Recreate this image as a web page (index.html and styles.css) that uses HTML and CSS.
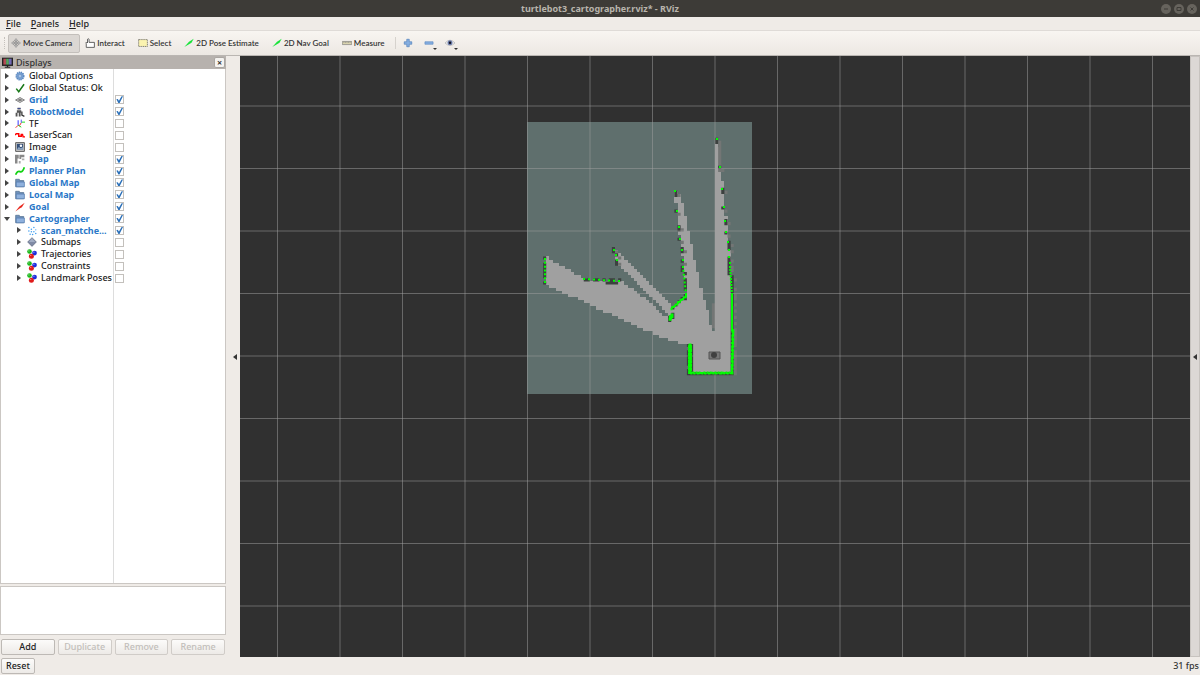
FILE: index.html
```
<!DOCTYPE html>
<html lang="en">
<head>
    <meta charset="UTF-8">
    <meta name="viewport" content="width=device-width, initial-scale=1.0">
    <title>turtlebot3_cartographer.rviz* - RViz</title>
    <link rel="stylesheet" href="styles.css">
</head>
<body>
    <!-- shared icons -->
    <svg class="sprite" aria-hidden="true">
        <symbol id="i-move" viewBox="0 0 16 16"><g fill="#ddd" stroke="#777" stroke-width="1"><path d="M8 1l2.500 3h-1.500v2h-2V4H5.500zM8 15l2.500-3H9v-2H7v2H5.500zM1 8l3-2.500V7h2v2H4v1.500zM15 8l-3-2.500V7h-2v2h2v1.500z"/><circle cx="8" cy="8" r="1.500"/></g></symbol>
        <symbol id="i-hand" viewBox="0 0 16 16"><path d="M2 15V9L1 8l1.500-1.500L4 8V2q1.500-1.500 2.500 0v5H15v8z" fill="#fff" stroke="#444" stroke-width="1.300"/></symbol>
        <symbol id="i-select" viewBox="0 0 16 16"><path d="M1 2.500h14v11H1z" fill="#fbf3b0" stroke="#444" stroke-dasharray="2 1"/></symbol>
        <symbol id="i-arrow" viewBox="0 0 16 16"><path d="M.5 14.500L8 6l7.500-5L12 7.500 8 10z" fill="#1be33b"/></symbol>
        <symbol id="i-ruler" viewBox="0 0 16 16"><path d="M.5 5.500h15v5H.5z" fill="#d9d3ae" stroke="#777"/><path d="M3 6v2M5.500 6v2M8 6v2M10.500 6v2M13 6v2" stroke="#888"/></symbol>
        <symbol id="i-plus" viewBox="0 0 16 16"><path d="M6 2h4v4h4v4h-4v4H6v-4H2V6h4z" fill="#85aee0" stroke="#4a7ab8"/></symbol>
        <symbol id="i-minus" viewBox="0 0 16 16"><path d="M1.500 6h13v4h-13z" fill="#85aee0" stroke="#5c8ac4"/></symbol>
        <symbol id="i-eye" viewBox="0 0 16 16"><path d="M0 8q8-9 16 0-8 8-16 0z" fill="#eee" stroke="#aaa"/><circle cx="8" cy="7.500" r="4" fill="#7080ae"/><circle cx="8" cy="7.500" r="2" fill="#112"/></symbol>
        <symbol id="i-monitor" viewBox="0 0 16 16"><path d="M0 1h16v12H0z" fill="#222"/><path d="M2 2.500h4v8.500H2z" fill="#b44b55"/><path d="M6 2.500h4v8.500H6z" fill="#55a561"/><path d="M10 2.500h4v8.500h-4z" fill="#7269b5"/><path d="M7 12h2v2h3v1.500H4V14h3z" fill="#222"/></symbol>
        <symbol id="i-gear" viewBox="0 0 16 16"><circle cx="8" cy="8" r="6" fill="#7ba3d4" stroke="#5b88bf" stroke-width="2.500" stroke-dasharray="2 1.200"/><circle cx="8" cy="8" r="3" fill="#a9c4e6" stroke="#5b88bf"/></symbol>
        <symbol id="i-check" viewBox="0 0 16 16"><path d="M2 9l4 5L14.500 2" fill="none" stroke="#187818" stroke-width="2.400"/></symbol>
        <symbol id="i-grid" viewBox="0 0 16 16"><path d="M1 8l7-4 7 4-7 4zM4.500 6l7 4M11.500 6l-7 4M8 4v8M1 8h14" fill="none" stroke="#666" stroke-width="1.100"/></symbol>
        <symbol id="i-robot" viewBox="0 0 16 16"><path d="M4 1h5v3H4zM3 5h7v4H3zM1 9h3v6H1zM6 9h3v6H6z" fill="#555"/><path d="M4 2h5v1H4z" fill="#3545ac"/><path d="M11 7v6l4 2" fill="none" stroke="#333" stroke-width="2"/></symbol>
        <symbol id="i-tf" viewBox="0 0 16 16"><g fill="none" stroke-width="1.600"><path d="M5 2v8" stroke="#33f"/><path d="M5 10l-4 4" stroke="#e33"/><path d="M5 10l5 3" stroke="#2c2"/><path d="M10 6l-3 5" stroke="#e33"/><path d="M10 5h6" stroke="#2d2"/><path d="M10 6V1" stroke="#55f"/></g></symbol>
        <symbol id="i-laser" viewBox="0 0 16 16"><path d="M0 8l2-2h4v4h4V7h2l1 4h3" fill="none" stroke="#f00" stroke-width="2.300"/></symbol>
        <symbol id="i-image" viewBox="0 0 16 16"><path d="M1 1h14v14H1z" fill="#ccc" stroke="#555" stroke-width="1.500"/><path d="M3 3h10v9H3z" fill="#365078"/><path d="M3 12l3-4 3 2 4-2v4z" fill="#8fa7c4"/><circle cx="9.500" cy="6" r="2" fill="#fff"/></symbol>
        <symbol id="i-map" viewBox="0 0 16 16"><path d="M0 1h6v6H4v8H0zM7 1h8v4h-5v3H7z" fill="#888"/><path d="M11 7h4v3h-4zM6 11h3v4H6z" fill="#aaa"/></symbol>
        <symbol id="i-path" viewBox="0 0 16 16"><path d="M1 14q3-7 7-5t7-7" fill="none" stroke="#12d312" stroke-width="2.800"/></symbol>
        <symbol id="i-folder" viewBox="0 0 16 16"><path d="M1 3V2h6v2h7v10H1z" fill="#6f91bb" stroke="#4a6689"/><path d="M2 6.500h13V14H2z" fill="#8fb1dd" stroke="#4d76aa"/></symbol>
        <symbol id="i-goal" viewBox="0 0 16 16"><path d="M.5 15L7 7l8.500-6L11 8.500 8 10z" fill="#e8281e"/></symbol>
        <symbol id="i-points" viewBox="0 0 16 16"><g fill="#3d9df0"><circle cx="3" cy="2.500" r="1.200"/><circle cx="7" cy="5" r="1.200"/><circle cx="11" cy="2.500" r="1.200"/><circle cx="14" cy="6" r="1"/><circle cx="3" cy="8" r="1.200"/><circle cx="7" cy="9" r="1.200"/><circle cx="11" cy="9" r="1.200"/><circle cx="5" cy="13" r="1.200"/><circle cx="9" cy="13.500" r="1.200"/><circle cx="14" cy="12" r="1.200"/></g></symbol>
        <symbol id="i-diamond" viewBox="0 0 16 16"><path d="M8 1l7 7-7 7-7-7z" fill="#7f8aa5" stroke="#596278"/><path d="M8 2l5 6H3z" fill="#a2adc4"/></symbol>
        <symbol id="i-balls" viewBox="0 0 16 16"><circle cx="4" cy="4" r="3.700" fill="#18b818"/><circle cx="12" cy="6.500" r="3.800" fill="#1c2dde"/><circle cx="7" cy="11.500" r="4" fill="#e01b1b"/><g fill="#fff" opacity=".6"><circle cx="3" cy="3" r="1"/><circle cx="11" cy="5" r="1"/><circle cx="6" cy="10" r="1"/></g></symbol>
    </svg>

    <div class="titlebar">
        <h1>turtlebot3_cartographer.rviz* - RViz</h1>
        <div class="window-buttons">
            <button aria-label="Minimize"><svg viewBox="0 0 10 10"><path d="M3 5h4"/></svg></button>
            <button aria-label="Maximize"><svg viewBox="0 0 10 10"><path d="M3 3.500h4v3H3z"/></svg></button>
            <button aria-label="Close"><svg viewBox="0 0 10 10"><path d="M3.500 3.500l3 3M6.500 3.500l-3 3"/></svg></button>
        </div>
    </div>
    <nav class="menubar">
        <button><u>F</u>ile</button>
        <button><u>P</u>anels</button>
        <button><u>H</u>elp</button>
    </nav>
    <div class="toolbar">
        <span class="handle"></span>
        <button class="tool active"><svg><use href="#i-move"/></svg>Move Camera</button>
        <button class="tool"><svg><use href="#i-hand"/></svg>Interact</button>
        <button class="tool"><svg><use href="#i-select"/></svg>Select</button>
        <button class="tool"><svg><use href="#i-arrow"/></svg>2D Pose Estimate</button>
        <button class="tool"><svg><use href="#i-arrow"/></svg>2D Nav Goal</button>
        <button class="tool"><svg><use href="#i-ruler"/></svg>Measure</button>
        <span class="separator"></span>
        <button class="small-tool" aria-label="Add tool"><svg><use href="#i-plus"/></svg></button>
        <button class="small-tool drop" aria-label="Remove tool"><svg><use href="#i-minus"/></svg></button>
        <button class="small-tool drop" aria-label="Tool visibility"><svg><use href="#i-eye"/></svg></button>
    </div>

    <main>
        <aside class="displays">
            <div class="panel-title">
                <svg><use href="#i-monitor"/></svg>
                <h2>Displays</h2>
                <button aria-label="Close panel">×</button>
            </div>
            <div class="tree-box">
                <ul class="tree" id="tree"></ul>
            </div>
            <div class="description"></div>
            <div class="actions">
                <button>Add</button>
                <button disabled>Duplicate</button>
                <button disabled>Remove</button>
                <button disabled>Rename</button>
            </div>
        </aside>
        <button class="collapse left" aria-label="Hide left panels"></button>
        <svg class="view" viewBox="240 56 950 601" preserveAspectRatio="xMidYMid slice">
            <rect class="map" x="527" y="122" width="225" height="272"/>
            <g id="cells"></g>
            <g id="grid"></g>
            <g id="scan"></g>
            <g class="robot">
                <path d="M709 352h11v7h-11z"/>
                <circle cx="714" cy="355" r="3"/>
            </g>
        </svg>
        <button class="collapse right" aria-label="Hide right panels"></button>
    </main>
    <footer>
        <button>Reset</button>
        <span>31 fps</span>
    </footer>
    <script src="script.js"></script>
</body>
</html>
```
FILE: styles.css
```
* {
    box-sizing: border-box;
}
body {
    margin: 0;
    height: 100vh;
    display: flex;
    flex-direction: column;
    overflow: hidden;
    background: #efebe7;
    color: #333;
    font-family: "Noto Sans", "Open Sans", sans-serif;
    font-size: 9px;
    line-height: 12px;
}
button {
    font: inherit;
    color: inherit;
    padding: 0;
    border: none;
    background: none;
}
h1, h2 {
    margin: 0;
    font-size: inherit;
}
.sprite {
    display: none;
}
.titlebar {
    display: grid;
    grid-template-columns: 1fr auto 1fr;
    align-items: center;
    height: 17px;
    background: #3d3b37;
    color: #b8b4ac;
}
.titlebar h1 {
    grid-column: 2;
    font-weight: 700;
}
.window-buttons {
    display: flex;
    justify-content: flex-end;
    gap: 3px;
    padding-right: 3px;
}
.window-buttons button {
    width: 10px;
    height: 10px;
    border-radius: 50%;
    background: #66635d;
}
.window-buttons svg {
    display: block;
    fill: none;
    stroke: #3d3b37;
}
.menubar {
    display: flex;
    gap: 10px;
    height: 14px;
    padding: 1px 6px;
    border-bottom: 1px solid #dfdbd7;
    color: #222;
    font-weight: 500;
}
.menubar u {
    text-underline-offset: 1px;
}
.toolbar {
    display: flex;
    align-items: center;
    height: 25px;
    padding: 0 4px;
    border-bottom: 1px solid #bab6b2;
    background: linear-gradient(#f8f5f1, #ece8e3);
    font-family: Lato, "Noto Sans", sans-serif;
    font-size: 8px;
    font-weight: 600;
}
.handle {
    width: 2px;
    height: 12px;
    margin-right: 2px;
    border-left: 1px dotted #c5c1bc;
}
.tool {
    display: flex;
    align-items: center;
    gap: 2px;
    height: 19px;
    padding: 0 3px 0 2px;
    margin-right: 6px;
    border: 1px solid transparent;
    border-radius: 2px;
}
.tool.active {
    background: #dbd7d3;
    border-color: #c3bfbb;
    padding-right: 7px;
    margin-right: 2px;
}
.tool svg, .small-tool svg {
    width: 10px;
    height: 10px;
}
.separator {
    height: 12px;
    margin-right: 7px;
    border-left: 1px solid #d6d2cd;
}
.small-tool {
    display: flex;
    position: relative;
    margin-right: 11px;
}
.drop::after {
    content: "";
    position: absolute;
    right: -3px;
    bottom: -2px;
    border: 2px solid transparent;
    border-top-color: #333;
    border-bottom: none;
}
main {
    flex: 1;
    display: flex;
    min-height: 0;
}
.displays {
    width: 226px;
    display: flex;
    flex-direction: column;
}
.panel-title {
    display: flex;
    align-items: center;
    gap: 3px;
    height: 13px;
    padding: 0 1px 0 2px;
    background: #b7b2ae;
}
.panel-title svg {
    width: 11px;
    height: 11px;
}
.panel-title h2 {
    flex: 1;
    font-weight: 500;
}
.panel-title button {
    width: 11px;
    height: 11px;
    border: 1px solid #aaa6a2;
    border-radius: 2px;
    background: #f5f3f0;
    font-weight: 700;
    line-height: 8px;
}
.tree-box {
    flex: 1;
    border: 1px solid #cbc7c3;
    border-top: none;
    /* value column divider */
    background: linear-gradient(#ddd, #ddd) 112px 0 / 1px 100% no-repeat #fff;
}
.tree {
    display: grid;
    grid-auto-rows: 1fr;
    height: 215px;
    margin: 0;
    padding: 1px 0 0;
    list-style: none;
    font-weight: 500;
}
.tree li {
    display: flex;
    align-items: center;
    min-height: 0;
    padding-left: 2px;
    color: #222;
}
.tree .child {
    padding-left: 14px;
}
.tree label {
    display: flex;
    flex: 1;
    align-items: center;
}
.tree .name {
    display: flex;
    align-items: center;
    gap: 4px;
    width: 99px;
    white-space: nowrap;
}
.tree .child .name {
    width: 87px;
}
.tree svg {
    flex: none;
    width: 10px;
    height: 10px;
}
.tree .on {
    color: #2a78c8;
    font-weight: 700;
}
.expander {
    width: 12px;
    height: 10px;
    display: flex;
    align-items: center;
}
.expander::before {
    content: "";
    margin-left: 2px;
    border: 3px solid transparent;
    border-left: 4px solid #444;
    border-right: none;
}
.expander.open::before {
    margin-left: 1px;
    border: 3px solid transparent;
    border-top: 4px solid #444;
    border-bottom: none;
}
input[type="checkbox"] {
    appearance: none;
    flex: none;
    width: 9px;
    height: 9px;
    margin: 0 0 0 1px;
    border: 1px solid #c3c0bc;
    background: #fff;
}
input[type="checkbox"]:checked::before {
    content: "";
    display: block;
    width: 7px;
    height: 7px;
    background: #2a6fb8;
    clip-path: polygon(5% 45%, 25% 40%, 42% 65%, 80% 0, 100% 0, 50% 100%, 35% 100%);
}
.description {
    height: 49px;
    margin-top: 2px;
    border: 1px solid #cbc7c3;
    background: #fff;
}
.actions {
    display: grid;
    grid-template-columns: repeat(4, 1fr);
    gap: 3px;
    padding: 4px 1px 2px;
}
.actions button, footer button {
    height: 16px;
    border: 1px solid #bdb9b5;
    border-radius: 2px;
    background: linear-gradient(#fcfbfa, #edeae7);
    color: #222;
    font-weight: 500;
}
.actions button:disabled {
    border-color: #d0ccc8;
    color: #c2beba;
}
.collapse {
    display: flex;
    align-items: center;
    justify-content: center;
    width: 14px;
}
.collapse::before {
    content: "";
    border: 3px solid transparent;
    border-right: 4px solid #333;
    border-left: none;
}
.collapse.left {
    padding-left: 4px;
}
.collapse.right {
    width: 10px;
    border: 1px solid #c7c3bf;
    background: #dcd8d5;
}
.view {
    flex: 1;
    min-width: 0;
    height: 100%;
    background: #303030;
}
.map {
    fill: #5f6f6d;
}
.free {
    fill: #a0a0a0;
}
.wall {
    fill: #3c413f;
}
.edge {
    fill: #737675;
}
.hit {
    fill: #0f0;
}
.line {
    stroke: #a0a0a0;
    stroke-opacity: 0.5;
}
.robot path {
    fill: #777;
    stroke: #555;
}
.robot circle {
    fill: #404040;
}
footer {
    display: flex;
    align-items: center;
    justify-content: space-between;
    height: 18px;
    padding: 0 1px;
    font-weight: 500;
}
footer button {
    padding: 0 4px;
}
```
FILE: script.js
```
const SVG = 'http://www.w3.org/2000/svg';

// name, icon, state (true / false / null = no checkbox), child
const displays = [
    ['Global Options', 'gear', null],
    ['Global Status: Ok', 'check', null],
    ['Grid', 'grid', true],
    ['RobotModel', 'robot', true],
    ['TF', 'tf', false],
    ['LaserScan', 'laser', false],
    ['Image', 'image', false],
    ['Map', 'map', true],
    ['Planner Plan', 'path', true],
    ['Global Map', 'folder', true],
    ['Local Map', 'folder', true],
    ['Goal', 'goal', true],
    ['Cartographer', 'folder', true],
    ['scan_matche...', 'points', true, true],
    ['Submaps', 'diamond', false, true],
    ['Trajectories', 'balls', false, true],
    ['Constraints', 'balls', false, true],
    ['Landmark Poses', 'balls', false, true]
];

document.getElementById('tree').innerHTML = displays.map(([name, icon, state, child]) => {
    const tag = state === null ? 'span' : 'label';
    const box = state === null ? '' : `<input type="checkbox" ${state ? 'checked' : ''}>`;
    return `<li class="${child ? 'child' : ''}">
        <button class="expander ${name === 'Cartographer' ? 'open' : ''}" aria-label="Expand ${name}"></button>
        <${tag}><span class="name ${state ? 'on' : ''}"><svg><use href="#i-${icon}"/></svg>${name}</span>${box}</${tag}>
    </li>`;
}).join('');

function add(parent, tag, attrs) {
    const el = document.createElementNS(SVG, tag);
    for (const key in attrs) {
        el.setAttribute(key, attrs[key]);
    }
    document.getElementById(parent).appendChild(el);
}

// 1 m grid
const METER = 62.5;
for (let x = 277.5 - METER * 10; x < 2400; x += METER) {
    add('grid', 'path', { class: 'line', d: `M${x} -600V1400` });
}
for (let y = 106 - METER * 10; y < 1400; y += METER) {
    add('grid', 'path', { class: 'line', d: `M-600 ${y}H2400` });
}

// occupancy map, 5 cm cells
const CELL = METER / 20;
const LEFT = 527.5;
const TOP = 122;

const free = [
    // long beam and the box around the robot
    [[715, 141], [719, 141], [722, 172], [724, 195], [727, 225], [730, 262], [732, 290], [733, 373],
     [692, 373], [692, 346], [711, 330], [713, 340], [715, 300]],
    // second beam
    [[675, 190], [678, 190], [681, 197], [684, 210], [687, 225], [690, 238], [696, 264], [702, 292],
     [706, 305], [709, 320], [711, 330], [714, 350], [690, 346], [671, 320], [671, 309], [686, 296],
     [685, 280], [682, 255], [678, 225], [676, 203]],
    // narrow beam
    [[613, 250], [616, 249], [624, 257], [668, 303], [674, 309], [671, 316], [618, 263]],
    // wide beam on the left
    [[546, 257], [552, 260], [581, 277], [586, 280], [622, 282], [634, 289], [669, 319], [692, 319],
     [692, 346], [672, 341], [647, 331], [586, 303], [546, 285]]
];

function inside(poly, x, y) {
    let hit = false;
    for (let i = 0, j = poly.length - 1; i < poly.length; j = i++) {
        const [xi, yi] = poly[i];
        const [xj, yj] = poly[j];
        if ((yi > y) !== (yj > y) && x < (xj - xi) * (y - yi) / (yj - yi) + xi) {
            hit = !hit;
        }
    }
    return hit;
}

function cellPath(col, row) {
    return `M${LEFT + col * CELL} ${TOP + row * CELL}h${CELL}v${CELL}h-${CELL}z`;
}

let freePath = '';
for (let row = 0; row < 87; row++) {
    for (let col = 0; col < 72; col++) {
        const x = LEFT + (col + 0.5) * CELL;
        const y = TOP + (row + 0.5) * CELL;
        if (free.some(poly => inside(poly, x, y))) {
            freePath += cellPath(col, row);
        }
    }
}
add('cells', 'path', { class: 'free', d: freePath, 'shape-rendering': 'crispEdges' });

// laser returns: single points and [x1, y1, x2, y2, spacing, size] runs
const points = [
    [717, 139], [720, 167], [722, 189], [724, 207], [725, 221], [726, 232], [728, 242],
    [729, 250], [729, 257], [730, 263], [675, 191], [677, 211], [679, 227], [680, 239],
    [682, 250], [683, 260], [614, 250], [616, 255], [617, 260]
];
const runs = [
    [545, 259, 545, 282, 4, 2],
    [584, 279, 619, 281, 5, 2],
    [683, 267, 686, 294, 4, 2],
    [686, 296, 671, 309, 1, 2],
    [672, 315, 670, 319, 1, 3],
    [730, 267, 732, 294, 3, 2],
    [732, 294, 732, 330, 2, 2],
    [733, 330, 732, 372, 1, 2],
    [690, 345, 690, 372, 1, 3],
    [690, 373, 732, 373, 1, 2]
];
const hits = points.map(([x, y]) => [x, y, 2, true]);
runs.forEach(([x1, y1, x2, y2, spacing, size]) => {
    const count = Math.round(Math.hypot(x2 - x1, y2 - y1) / spacing);
    // sensor noise on the dense runs
    const noise = spacing === 1 ? 0.6 : 0;
    for (let i = 0; i <= count; i++) {
        hits.push([
            x1 + (x2 - x1) * i / count + noise * Math.sin(i * 2.3),
            y1 + (y2 - y1) * i / count + noise * Math.sin(i * 1.7),
            size,
            false
        ]);
    }
});

let wall = '';
let edge = '';
hits.forEach(([x, y, size, single], i) => {
    const col = Math.floor((x - LEFT) / CELL);
    const row = Math.floor((y - TOP) / CELL);
    wall += cellPath(col, row);
    if (single) {
        wall += i % 2 ? '' : cellPath(col, row + 1);
        edge += cellPath(col + 1, row + 1);
    } else if (i % 3 === 0 && x > 700) {
        edge += cellPath(col + 1, row);
    }
});
for (let x = 606; x < 620; x += 3) {
    wall += cellPath(Math.floor((x - LEFT) / CELL), 51);
}
// unsure strips beside and inside the long beam
for (let row = 58; row < 66; row++) {
    edge += cellPath(59, row);
}
for (let row = 6; row < 16; row++) {
    edge += cellPath(61, row);
}
add('cells', 'path', { class: 'edge', d: edge });
add('cells', 'path', { class: 'wall', d: wall });
add('scan', 'path', {
    class: 'hit',
    d: hits.map(([x, y, s]) => `M${x - s / 2} ${y - s / 2}h${s}v${s}h-${s}z`).join('')
});
```
